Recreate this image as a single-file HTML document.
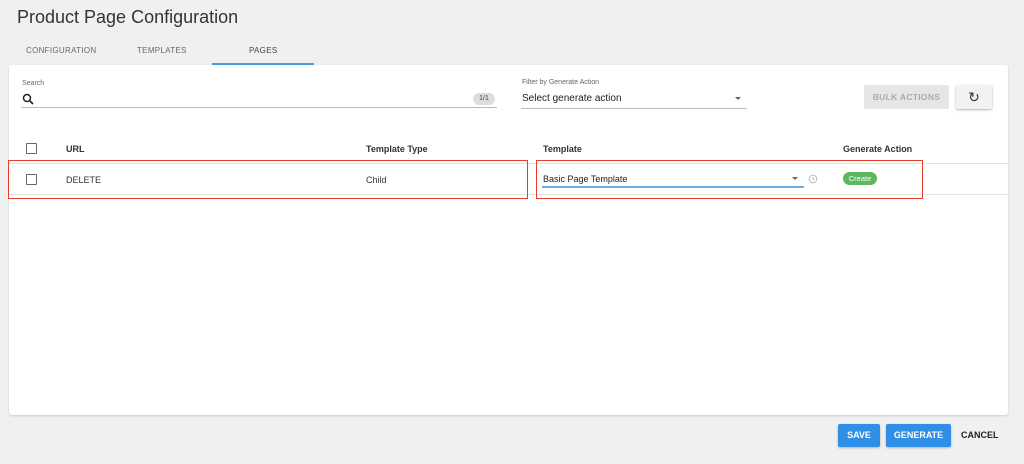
<!DOCTYPE html>
<html><head><style>
*{box-sizing:border-box;margin:0;padding:0}
body{width:1024px;height:464px;background:#f0f0f0;font-family:"Liberation Sans",sans-serif;position:relative;overflow:hidden;color:#222}
.a{position:absolute}
.tab{font-size:8px;color:#666;letter-spacing:.3px}
.card{left:9px;top:65px;width:999px;height:350px;background:#fff;border-radius:3px;box-shadow:0 1px 2px rgba(0,0,0,.15)}
.cb{width:11px;height:11px;border:1.5px solid #666;border-radius:1px}
.th{font-size:9px;font-weight:bold;color:#333}
.td{font-size:9px;color:#333}
.btn{background:#2f8fe6;color:#fff;font-size:9px;font-weight:bold;text-align:center;border-radius:2px;box-shadow:0 1px 2px rgba(0,0,0,.25)}
</style></head><body>
<div class="a" style="left:17px;top:7px;font-size:18px;color:#333">Product Page Configuration</div>
<div class="a tab" style="left:26px;top:46px">CONFIGURATION</div>
<div class="a tab" style="left:137px;top:46px">TEMPLATES</div>
<div class="a tab" style="left:249px;top:46px;color:#444">PAGES</div>
<div class="a" style="left:212px;top:63px;width:102px;height:2px;background:#4a9ce0"></div>
<div class="a card"></div>
<div class="a" style="left:22px;top:80px;font-size:7px;color:#666">Search</div>
<svg class="a" style="left:22px;top:93px" width="12" height="12" viewBox="0 0 12 12"><circle cx="5" cy="5" r="3.5" fill="none" stroke="#222" stroke-width="1.5"/><line x1="7.5" y1="7.5" x2="11" y2="11" stroke="#222" stroke-width="1.6"/></svg>
<div class="a" style="left:473px;top:93px;width:22px;height:12px;border-radius:6px;background:#ddd;font-size:7px;color:#444;text-align:center;line-height:12px">1/1</div>
<div class="a" style="left:21px;top:107px;width:476px;height:1px;background:#bbb"></div>
<div class="a" style="left:522px;top:79px;font-size:7px;color:#666">Filter by Generate Action</div>
<div class="a" style="left:522px;top:93px;font-size:10px;color:#222">Select generate action</div>
<div class="a" style="left:735px;top:97px;border:3px solid transparent;border-top:3px solid #666"></div>
<div class="a" style="left:521px;top:108px;width:226px;height:1px;background:#bbb"></div>
<div class="a" style="left:864px;top:85px;width:85px;height:24px;background:#e6e6e6;border-radius:2px;font-size:8.5px;color:#aaa;text-align:center;line-height:24px;font-weight:bold;letter-spacing:.3px">BULK ACTIONS</div>
<div class="a" style="left:956px;top:85px;width:36px;height:24px;background:#f2f2f2;border-radius:2px;box-shadow:0 1px 2px rgba(0,0,0,.3);font-size:14px;text-align:center;line-height:24px;color:#333">&#8635;</div>
<div class="a cb" style="left:26px;top:143px"></div>
<div class="a th" style="left:66px;top:144px">URL</div>
<div class="a th" style="left:366px;top:144px">Template Type</div>
<div class="a th" style="left:543px;top:144px">Template</div>
<div class="a th" style="left:843px;top:144px">Generate Action</div>
<div class="a" style="left:9px;top:163px;width:999px;height:1px;background:#e4e4e4"></div>
<div class="a" style="left:9px;top:194px;width:999px;height:1px;background:#e4e4e4"></div>
<div class="a cb" style="left:26px;top:174px"></div>
<div class="a td" style="left:66px;top:175px">DELETE</div>
<div class="a td" style="left:366px;top:175px">Child</div>
<div class="a td" style="left:543px;top:174px;color:#222">Basic Page Template</div>
<div class="a" style="left:792px;top:177px;border:3px solid transparent;border-top:3px solid #666"></div>
<div class="a" style="left:542px;top:186px;width:262px;height:1.5px;background:#6aaee6"></div>
<svg class="a" style="left:808px;top:174px" width="10" height="10" viewBox="0 0 10 10"><circle cx="5" cy="5" r="3.8" fill="none" stroke="#bbb" stroke-width="1"/><path d="M5 3v2.2l1.3.8" stroke="#bbb" fill="none"/></svg>
<div class="a" style="left:843px;top:172px;width:34px;height:13px;border-radius:7px;background:#5cb85c;color:#fff;font-size:7.5px;text-align:center;line-height:13px">Create</div>
<div class="a" style="left:8px;top:160px;width:520px;height:39px;border:1.5px solid #e53c2a"></div>
<div class="a" style="left:536px;top:160px;width:387px;height:39px;border:1.5px solid #e53c2a"></div>
<div class="a btn" style="left:838px;top:424px;width:42px;height:23px;line-height:23px">SAVE</div>
<div class="a btn" style="left:886px;top:424px;width:65px;height:23px;line-height:23px">GENERATE</div>
<div class="a" style="left:961px;top:430px;font-size:9px;font-weight:bold;color:#222">CANCEL</div>
</body></html>
